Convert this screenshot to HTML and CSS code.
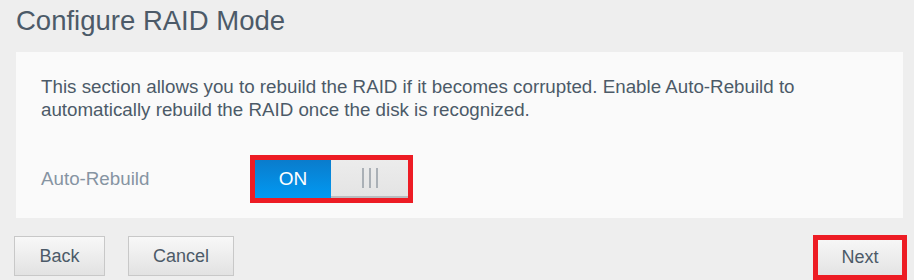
FILE: index.html
```html
<!DOCTYPE html>
<html>
<head>
<meta charset="utf-8">
<link rel="stylesheet" href="styles.css">
</head>
<body>
<div class="page">
  <h1 class="title">Configure RAID Mode</h1>
  <div class="card">
    <p class="desc">This section allows you to rebuild the RAID if it becomes corrupted. Enable Auto-Rebuild to automatically rebuild the RAID once the disk is recognized.</p>
    <div class="row">
      <div class="label">Auto-Rebuild</div>
      <div class="toggle highlight">
        <div class="toggle-on">ON</div>
        <div class="toggle-off"><span class="grip"></span><span class="grip"></span><span class="grip"></span></div>
      </div>
    </div>
  </div>
  <div class="footer">
    <div class="left">
      <button class="btn btn-back">Back</button>
      <button class="btn btn-cancel">Cancel</button>
    </div>
    <button class="btn btn-next">Next</button>
  </div>
</div>
</body>
</html>
```
FILE: styles.css
```css
html, body {
  margin: 0;
  padding: 0;
  background: #eeeeee;
  font-family: "Liberation Sans", Arial, sans-serif;
}
.page {
  width: 914px;
  height: 280px;
  overflow: hidden;
  padding-top: 5px;
  box-sizing: border-box;
}
.title {
  margin: 0 0 15px 16px;
  font-size: 27.5px;
  line-height: 32px;
  font-weight: normal;
  color: #4c5a68;
}
.card {
  margin-left: 16px;
  width: 887px;
  box-sizing: border-box;
  background: #fafafa;
  padding: 23px 20px 20px 25px;
}
.desc {
  margin: 0;
  font-size: 18.75px;
  line-height: 23px;
  color: #4c5a68;
}
.row {
  display: flex;
  align-items: center;
  margin-top: 39px;
}
.label {
  width: 214px;
  font-size: 18.75px;
  color: #8694a2;
}
.toggle {
  display: flex;
  width: 153px;
  height: 38px;
}
.highlight {
  outline: 5px solid #ed1c24;
}
.toggle-on {
  width: 76px;
  display: flex;
  align-items: center;
  justify-content: center;
  color: #ffffff;
  font-size: 19px;
  background: linear-gradient(#0a7ccc, #0199f2);
}
.toggle-off {
  flex: 1;
  display: flex;
  align-items: center;
  justify-content: center;
  gap: 5px;
  background: linear-gradient(#ececec, #e4e4e4);
  border-bottom: 2px solid #b8bcc0;
  box-sizing: border-box;
}
.grip {
  width: 2px;
  height: 20px;
  background: #aab0b6;
}
.footer {
  display: flex;
  justify-content: space-between;
  align-items: flex-start;
  margin-top: 18px;
  padding: 0 8px 0 14px;
}
.left {
  display: flex;
  gap: 23px;
}
.btn {
  height: 40px;
  border: 1px solid #c8c8c8;
  background: linear-gradient(#f8f8f8, #e2e2e2);
  font-family: "Liberation Sans", Arial, sans-serif;
  font-size: 18px;
  color: #4c5a68;
  padding: 0;
  margin: 0;
  border-radius: 0;
}
.btn-back { width: 91px; }
.btn-cancel { width: 106px; }
.btn-next {
  width: 92px;
  height: 43px;
  outline: 5px solid #ed1c24;
  outline-offset: -4px;
}
```
